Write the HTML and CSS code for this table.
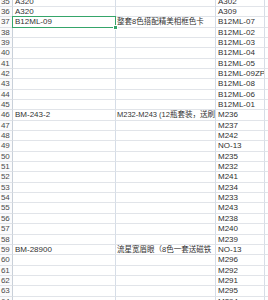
FILE: index.html
```html
<!DOCTYPE html>
<html>
<head>
<meta charset="utf-8">
<link rel="stylesheet" href="styles.css">
</head>
<body>
<div class="sheet">
  <div class="row"><div class="rh">35</div><div class="c b">A320</div><div class="c cc"></div><div class="c d">A302</div><div class="c e"></div></div>
  <div class="row"><div class="rh">36</div><div class="c b">A320</div><div class="c cc"></div><div class="c d">A309</div><div class="c e"></div></div>
  <div class="row"><div class="rh">37</div><div class="c b sel">B12ML-09</div><div class="c cc">整套8色搭配精美相框色卡</div><div class="c d">B12ML-07</div><div class="c e"></div></div>
  <div class="row"><div class="rh">38</div><div class="c b"></div><div class="c cc"></div><div class="c d">B12ML-02</div><div class="c e"></div></div>
  <div class="row"><div class="rh">39</div><div class="c b"></div><div class="c cc"></div><div class="c d">B12ML-03</div><div class="c e"></div></div>
  <div class="row"><div class="rh">40</div><div class="c b"></div><div class="c cc"></div><div class="c d">B12ML-04</div><div class="c e"></div></div>
  <div class="row"><div class="rh">41</div><div class="c b"></div><div class="c cc"></div><div class="c d">B12ML-05</div><div class="c e"></div></div>
  <div class="row"><div class="rh">42</div><div class="c b"></div><div class="c cc"></div><div class="c d">B12ML-09ZP</div><div class="c e"></div></div>
  <div class="row"><div class="rh">43</div><div class="c b"></div><div class="c cc"></div><div class="c d">B12ML-08</div><div class="c e"></div></div>
  <div class="row"><div class="rh">44</div><div class="c b"></div><div class="c cc"></div><div class="c d">B12ML-06</div><div class="c e"></div></div>
  <div class="row"><div class="rh">45</div><div class="c b"></div><div class="c cc"></div><div class="c d">B12ML-01</div><div class="c e"></div></div>
  <div class="row"><div class="rh">46</div><div class="c b">BM-243-2</div><div class="c cc">M232-M243 (12瓶套装，送刷</div><div class="c d">M236</div><div class="c e"></div></div>
  <div class="row"><div class="rh">47</div><div class="c b"></div><div class="c cc"></div><div class="c d">M237</div><div class="c e"></div></div>
  <div class="row"><div class="rh">48</div><div class="c b"></div><div class="c cc"></div><div class="c d">M242</div><div class="c e"></div></div>
  <div class="row"><div class="rh">49</div><div class="c b"></div><div class="c cc"></div><div class="c d">NO-13</div><div class="c e"></div></div>
  <div class="row"><div class="rh">50</div><div class="c b"></div><div class="c cc"></div><div class="c d">M235</div><div class="c e"></div></div>
  <div class="row"><div class="rh">51</div><div class="c b"></div><div class="c cc"></div><div class="c d">M232</div><div class="c e"></div></div>
  <div class="row"><div class="rh">52</div><div class="c b"></div><div class="c cc"></div><div class="c d">M241</div><div class="c e"></div></div>
  <div class="row"><div class="rh">53</div><div class="c b"></div><div class="c cc"></div><div class="c d">M234</div><div class="c e"></div></div>
  <div class="row"><div class="rh">54</div><div class="c b"></div><div class="c cc"></div><div class="c d">M233</div><div class="c e"></div></div>
  <div class="row"><div class="rh">55</div><div class="c b"></div><div class="c cc"></div><div class="c d">M243</div><div class="c e"></div></div>
  <div class="row"><div class="rh">56</div><div class="c b"></div><div class="c cc"></div><div class="c d">M238</div><div class="c e"></div></div>
  <div class="row"><div class="rh">57</div><div class="c b"></div><div class="c cc"></div><div class="c d">M240</div><div class="c e"></div></div>
  <div class="row"><div class="rh">58</div><div class="c b"></div><div class="c cc"></div><div class="c d">M239</div><div class="c e"></div></div>
  <div class="row"><div class="rh">59</div><div class="c b">BM-28900</div><div class="c cc">流星宽眉眼（8色一套送磁铁</div><div class="c d">NO-13</div><div class="c e"></div></div>
  <div class="row"><div class="rh">60</div><div class="c b"></div><div class="c cc"></div><div class="c d">M296</div><div class="c e"></div></div>
  <div class="row"><div class="rh">61</div><div class="c b"></div><div class="c cc"></div><div class="c d">M292</div><div class="c e"></div></div>
  <div class="row"><div class="rh">62</div><div class="c b"></div><div class="c cc"></div><div class="c d">M291</div><div class="c e"></div></div>
  <div class="row"><div class="rh">63</div><div class="c b"></div><div class="c cc"></div><div class="c d">M295</div><div class="c e"></div></div>
  <div class="row"><div class="rh">64</div><div class="c b"></div><div class="c cc"></div><div class="c d">M294</div><div class="c e"></div></div>
</div>
</body>
</html>
```
FILE: styles.css
```css
html, body {
  margin: 0;
  padding: 0;
  background: #ffffff;
  overflow: hidden;
}
body {
  width: 268px;
  height: 300px;
  font-family: "Liberation Sans", "Noto Sans CJK SC", sans-serif;
  font-size: 8px;
  color: #333333;
}
.sheet {
  margin-top: -3.4px;
  display: flex;
  flex-direction: column;
}
.row {
  display: grid;
  grid-template-columns: 13px 103px 100px 49px 3px;
  height: 10.35px;
}
.rh, .c {
  box-sizing: border-box;
  border-bottom: 1px solid #e1e4e9;
  border-right: 1px solid #e1e4e9;
  white-space: nowrap;
  overflow: hidden;
  line-height: 10px;
}
.rh {
  background: #fbfbfc;
  border-right-color: #c9d0d9;
  border-bottom-color: #dfe2e7;
  color: #4a4a4a;
  font-size: 8px;
  padding-left: 1px;
  letter-spacing: -0.2px;
}
.b {
  padding-left: 2px;
  border-right-color: #d6dde7;
}
.cc {
  padding-left: 1px;
  font-size: 7.5px;
  border-right-color: #d6dde7;
}
.d {
  padding-left: 2px;
  color: #2f2f2f;
  border-right-color: #d6dde7;
}
.e {
  border-right: none;
}
.sel {
  position: relative;
  overflow: visible;
}
.sel::after {
  content: "";
  position: absolute;
  left: -1px;
  top: -1.5px;
  right: -1px;
  bottom: -1px;
  border: 1.5px solid #35a56a;
}
.sel::before {
  content: "";
  position: absolute;
  right: -2.5px;
  bottom: -2.5px;
  width: 3px;
  height: 3px;
  background: #35a56a;
  border: 0.5px solid #ffffff;
  z-index: 2;
}
```
